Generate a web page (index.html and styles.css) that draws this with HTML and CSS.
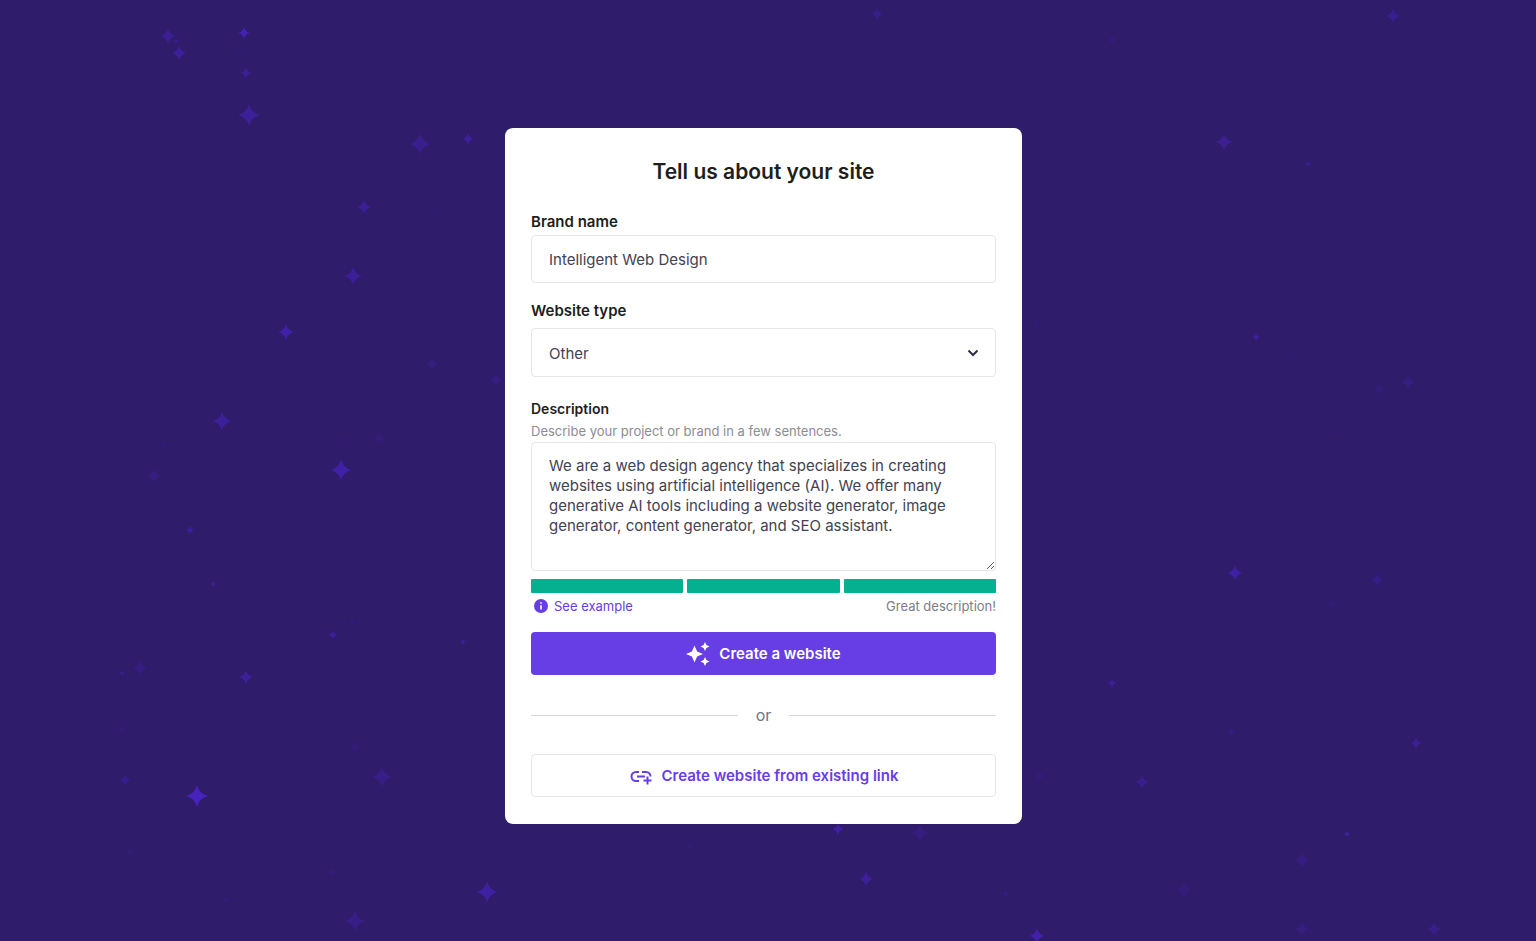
FILE: index.html
```html
<!DOCTYPE html>
<html lang="en">
<head>
	<meta charset="utf-8">
	<meta name="viewport" content="width=device-width, initial-scale=1">
	<title>Tell us about your site</title>
	<link rel="stylesheet" href="styles.css">
</head>
<body>
<svg class="stars" id="stars" viewBox="0 0 1536 941" preserveAspectRatio="xMidYMid slice" aria-hidden="true"></svg>

<main class="page">
	<form class="card">
		<h1 class="title">Tell us about your site</h1>

		<div class="field">
			<label for="brand">Brand name</label>
			<input class="control" type="text" id="brand" value="Intelligent Web Design">
		</div>

		<div class="field field_type">
			<label for="type">Website type</label>
			<div class="selectBox">
				<select class="control" id="type">
					<option>Other</option>
				</select>
				<svg class="chevron" viewBox="0 0 12 8" aria-hidden="true"><path d="M1.500 1.500 6 6l4.500-4.500"/></svg>
			</div>
		</div>

		<div class="field field_description">
			<label for="description">Description</label>
			<p class="hint" id="hint">Describe your project or brand in a few sentences.</p>
			<textarea class="control" id="description" aria-describedby="hint">We are a web design agency that specializes in creating websites using artificial intelligence (AI). We offer many generative AI tools including a website generator, image generator, content generator, and SEO assistant.</textarea>
		</div>

		<div class="strength">
			<span></span>
			<span></span>
			<span></span>
		</div>
		<div class="below">
			<a class="example" href="#">
				<svg class="info" viewBox="0 0 14 14" aria-hidden="true">
					<circle cx="7" cy="7" r="7" fill="#673de6"/>
					<path d="M7 6.200v4.300M7 3.300v1.500" stroke="#fff" stroke-width="1.600"/>
				</svg>
				See example
			</a>
			<span>Great description!</span>
		</div>

		<button class="btn btn_main" type="submit">
			<svg class="btnIcon" viewBox="0 0 24 24" fill="#fff" aria-hidden="true">
				<path d="M8.500 3.500l2.600 5.900 5.900 2.600-5.900 2.600-2.600 5.900-2.600-5.900L0 12l5.900-2.600z"/>
				<path d="M19 0l1.400 3.100 3.100 1.400-3.100 1.400L19 9l-1.400-3.100-3.100-1.400 3.100-1.400z"/>
				<path d="M19 15l1.400 3.100 3.100 1.400-3.100 1.400L19 24l-1.400-3.100-3.100-1.400 3.100-1.400z"/>
			</svg>
			Create a website
		</button>

		<div class="or">or</div>

		<button class="btn btn_link" type="button">
			<svg class="btnIcon" viewBox="0 0 24 24" fill="none" stroke="#673de6" stroke-width="2" aria-hidden="true">
				<path d="M10 8H7a4.500 4.500 0 0 0 0 9h3M8 12.500h8M13 8h4a4.500 4.500 0 0 1 4.500 4.500M18.500 12.500v8M14.500 16.500h8"/>
			</svg>
			Create website from existing link
		</button>
	</form>
</main>

<script src="stars.js"></script>
</body>
</html>
```

FILE: styles.css
```css
*{
	box-sizing: border-box;
	padding: 0;
	margin: 0;
}
body{
	background-color: #2f1c6a;
	font-family: Inter, "Open Sans", sans-serif;
	font-size: 15px;
	line-height: 20px;
	color: #1d1e20;
}
.stars{
	position: fixed;
	top: 0;
	left: 0;
	width: 100%;
	height: 100%;
	fill: #4722bb;
}
.page{
	position: relative;
	min-height: 100vh;
	display: flex;
	justify-content: center;
	align-items: center;
	padding: 11px 9px 0 0;
}
.card{
	width: 100%;
	max-width: 517px;
	padding: 30px 26px 27px;
	background-color: #fff;
	border-radius: 8px;
}
.title{
	font-size: 21px;
	line-height: 28px;
	font-weight: 600;
	text-align: center;
	margin-bottom: 26px;
}
.field{
	display: flex;
	flex-direction: column;
	gap: 3px;
	margin-bottom: 18px;
}
.field_type{
	gap: 7px;
	margin-bottom: 21px;
}
.field_description{
	gap: 0;
	margin-bottom: 8px;
}
label{
	font-weight: 600;
}
.field_description label{
	font-size: 14px;
	line-height: 22px;
}
.control{
	display: block;
	width: 100%;
	height: 48px;
	padding: 0 17px;
	border: 1px solid #e6e6ea;
	border-radius: 4px;
	background-color: #fff;
	font: inherit;
	color: #434252;
	appearance: none;
}
.selectBox{
	position: relative;
}
.selectBox .control{
	height: 49px;
	padding-top: 3px;
}
.chevron{
	position: absolute;
	top: 21px;
	right: 17px;
	width: 12px;
	height: 8px;
	fill: none;
	stroke: #2f2d45;
	stroke-width: 2;
	pointer-events: none;
}
textarea.control{
	height: 129px;
	padding: 13px 17px;
	resize: vertical;
}
.hint{
	font-size: 13px;
	line-height: 22px;
	color: #8b8c94;
}
.strength{
	display: grid;
	grid-template-columns: repeat(3, 1fr);
	gap: 4px;
}
.strength span{
	height: 14px;
	border-radius: 1px;
	background-color: #04b090;
}
.below{
	display: flex;
	justify-content: space-between;
	margin: 3px 0 16px;
	font-size: 13px;
	color: #7c7d86;
}
.example{
	display: flex;
	align-items: center;
	gap: 6px;
	padding-left: 3px;
	color: #673de6;
	text-decoration: none;
}
.info{
	width: 14px;
	height: 14px;
}
.btn{
	display: flex;
	justify-content: center;
	align-items: center;
	gap: 9px;
	width: 100%;
	height: 43px;
	border: 0;
	border-radius: 4px;
	font: inherit;
	font-weight: 600;
	cursor: pointer;
}
.btn_main{
	background-color: #673de6;
	color: #fff;
}
.btn_link{
	border: 1px solid #e6e6ea;
	background-color: #fff;
	color: #673de6;
}
.btnIcon{
	width: 24px;
	height: 24px;
}
.or{
	display: flex;
	align-items: center;
	gap: 18px;
	margin: 30px 0 29px;
	font-size: 16px;
	color: #727586;
}
.or::before,
.or::after{
	content: "";
	flex: 1;
	height: 1px;
	background-color: #d5d6df;
}
```

FILE: stars.js
```javascript
// x, y, size, opacity
let stars=[
	[168,36,16,.5],[176,41,8,.3],[179,53,15,.6],[244,33,12,.9],[246,73,12,.5],[249,115,22,.6],
	[239,50,10,.1],[420,144,21,.45],[468,139,12,.6],[364,207,15,.5],[353,276,18,.55],[423,173,8,.1],
	[435,209,5,.2],[286,332,16,.75],[222,421,19,.6],[341,470,21,.75],[432,364,13,.25],[496,380,13,.3],
	[163,445,8,.12],[154,476,15,.25],[379,438,13,.2],[339,440,10,.08],[190,530,9,.6],[213,584,6,.5],
	[333,635,10,.5],[352,622,10,.12],[463,642,6,.6],[140,668,15,.3],[122,673,6,.4],[246,677,14,.6],
	[122,730,10,.15],[355,747,15,.15],[382,777,21,.35],[125,780,11,.4],[197,796,22,1],[130,852,12,.12],
	[331,872,6,.25],[226,900,4,.4],[487,892,21,.7],[355,921,21,.35],[877,14,12,.4],[1393,16,15,.45],
	[1112,40,10,.2],[1224,142,17,.5],[1308,164,6,.5],[1256,337,7,.7],[1293,354,6,.15],[1408,382,15,.25],
	[1379,389,12,.2],[1037,323,9,.12],[1338,434,10,.1],[1235,573,15,.7],[1377,580,13,.35],[1331,604,10,.15],
	[1112,683,10,.5],[1231,732,8,.3],[1416,743,12,.5],[1142,782,14,.45],[1039,776,11,.2],[1347,834,6,.7],
	[1302,860,16,.3],[1184,890,17,.2],[1302,929,15,.25],[1434,929,14,.4],[1037,936,15,.8],[838,829,12,.7],
	[920,833,17,.3],[866,879,15,.6],[690,846,9,.15],[1006,894,7,.3]
];
let sky=document.getElementById('stars');
stars.forEach(([x,y,size,opacity])=>{
	let star=document.createElementNS('http://www.w3.org/2000/svg','path');
	star.setAttribute('d','M0-10Q2-2 10 0Q2 2 0 10Q-2 2-10 0Q-2-2 0-10z');
	star.setAttribute('transform','translate('+x+' '+y+') scale('+size/20+')');
	star.setAttribute('opacity',opacity);
	sky.appendChild(star);
});
```
